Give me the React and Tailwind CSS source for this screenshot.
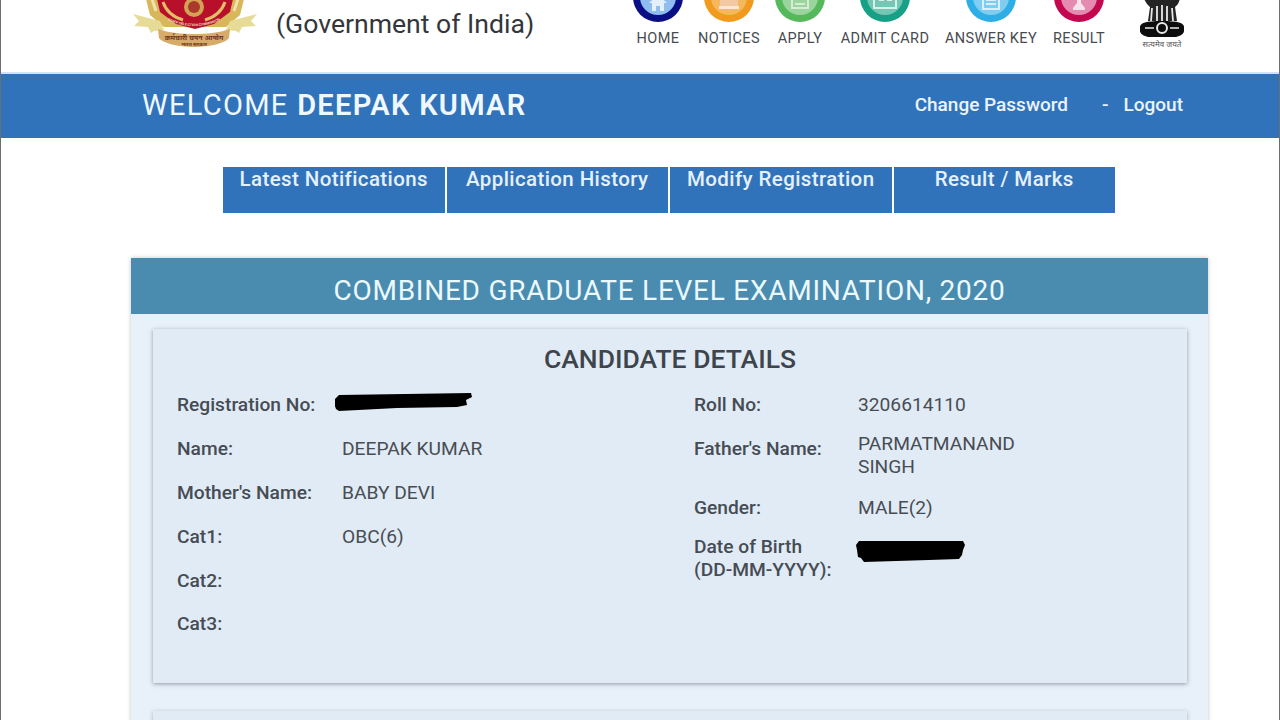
const navItems = [
  { label: 'HOME', width: 'w-[62px]', ring: 'bg-[#0b0f85]', inner: 'bg-[#8fbdf0]', glyph: 'home' },
  { label: 'NOTICES', width: 'w-[80px]', ring: 'bg-[#f09a1e]', inner: 'bg-[#f6b85f]', glyph: 'notice' },
  { label: 'APPLY', width: 'w-[62px]', ring: 'bg-[#55b85a]', inner: 'bg-[#9bd59d]', glyph: 'apply' },
  { label: 'ADMIT CARD', width: 'w-[108px]', ring: 'bg-[#16a085]', inner: 'bg-[#74c7b3]', glyph: 'card' },
  { label: 'ANSWER KEY', width: 'w-[104px]', ring: 'bg-[#2eaee6]', inner: 'bg-[#7fcdf0]', glyph: 'key' },
  { label: 'RESULT', width: 'w-[72px]', ring: 'bg-[#c4084f]', inner: 'bg-[#e58bb1]', glyph: 'result' },
];

const tabs = ['Latest Notifications', 'Application History', 'Modify Registration', 'Result / Marks'];

const leftRows = [
  ['Registration No:', null],
  ['Name:', 'DEEPAK KUMAR'],
  ["Mother's Name:", 'BABY DEVI'],
  ['Cat1:', 'OBC(6)'],
  ['Cat2:', ''],
  ['Cat3:', ''],
];

function NavGlyph({ type }) {
  return (
    <svg width="26" height="16" viewBox="0 0 26 16" className="mb-[4px]">
      {type === 'home' && <path d="M7 16V8H4l9-8 9 8h-3v8h-4v-5h-4v5z" fill="#e4f1fd" />}
      {type === 'notice' && (
        <g>
          <rect x="4" y="0" width="18" height="12" fill="#f3c9a3" />
          <rect x="3" y="11" width="20" height="3" fill="#fbe7d2" />
        </g>
      )}
      {type === 'apply' && (
        <g fill="none" stroke="#d5edd5" strokeWidth="2">
          <rect x="5" y="1" width="16" height="12" />
          <path d="M8 9h10" />
        </g>
      )}
      {type === 'card' && (
        <g fill="none" stroke="#d6f1ea" strokeWidth="2">
          <rect x="2" y="0" width="22" height="13" />
          <path d="M7 5h5M15 5h5" />
        </g>
      )}
      {type === 'key' && (
        <g fill="none" stroke="#d7f0fb" strokeWidth="2">
          <rect x="5" y="0" width="16" height="14" />
          <path d="M8 5h10M8 9h10" />
        </g>
      )}
      {type === 'result' && <path d="M11 0h4v8l4 5v2H7v-2l4-5z" fill="#f8e3ec" />}
    </svg>
  );
}

function NavItem({ item }) {
  return (
    <div className={`flex flex-col items-center ${item.width}`}>
      <div className={`flex h-[50px] w-[50px] items-center justify-center rounded-full ${item.ring}`}>
        <div className={`flex h-[36px] w-[36px] items-end justify-center rounded-full ${item.inner}`}>
          <NavGlyph type={item.glyph} />
        </div>
      </div>
      <span className="mt-[8px] text-[14.5px] leading-[18px] tracking-[0.4px] whitespace-nowrap text-[#474b50]">
        {item.label}
      </span>
    </div>
  );
}

function SscLogo() {
  return (
    <svg width="124" height="48" viewBox="0 0 124 48" className="shrink-0">
      {/* wreath behind the shield */}
      <path d="M13 0h98l-4 16-14 12H31L17 16z" fill="#d8b75a" />
      <path d="M19 0l4 12M27 0l4 14M105 0l-4 12M97 0l-4 14" stroke="#f0e2ae" strokeWidth="3" />
      {/* shield */}
      <path d="M24 0h76l-3 13-16 12-19 5-19-5-16-12z" fill="#b80f2a" />
      <circle cx="61" cy="8" r="10" fill="#d3a253" />
      <circle cx="61" cy="8" r="6" fill="#a93a2c" />
      <path d="M30 3c3 9 10 15 20 18M92 3c-3 9-10 15-20 18" fill="none" stroke="#e3bd67" strokeWidth="3" />
      <path id="ssc-arc" d="M30 18c8 6 20 9 31 9s23-3 31-9" fill="none" />
      <text fontSize="3.4" fill="#efe3cb" fontFamily="'Liberation Sans', sans-serif" fontWeight="700">
        <textPath href="#ssc-arc" startOffset="50%" textAnchor="middle">STAFF SELECTION COMMISSION</textPath>
      </text>
      {/* ribbon wings */}
      <path d="M0 15l27 7 4 9-10 1-3 2-3-6-14-1 5-5z" fill="#e6dc97" />
      <path d="M124 15l-27 7-4 9 10 1 3 2 3-6 14-1-5-5z" fill="#e6dc97" />
      {/* scroll */}
      <path d="M25 30c11 4 24 5 36 5s25-1 36-5l-1 9c-3 5-20 9-35 9s-32-4-35-9z" fill="#d7ab68" />
      <text x="61" y="41" textAnchor="middle" fontSize="7" fontWeight="700" fill="#6f3520" fontFamily="'Noto Sans', sans-serif">कर्मचारी चयन आयोग</text>
      <text x="61" y="47" textAnchor="middle" fontSize="5" fontWeight="700" fill="#6f3520" fontFamily="'Noto Sans', sans-serif">भारत सरकार</text>
    </svg>
  );
}

function Emblem() {
  return (
    <svg width="46" height="50" viewBox="0 0 46 50" className="shrink-0">
      <path d="M5 0h36l-2 5-3 3 2 14H9l2-14-3-3z" fill="#242424" />
      <path d="M13 9l-1 13M18 7v15M23 6v16M28 7v15M33 9l1 13" stroke="#e9e9e9" strokeWidth="1.8" />
      <path d="M1 28c0-4 6-6 22-6s22 2 22 6v4c0 3-4 5-8 6H9c-4-1-8-3-8-6z" fill="#0d0d0d" />
      <circle cx="23" cy="29" r="5" fill="none" stroke="#e8e8e8" strokeWidth="2" />
      <path d="M6 29h9M31 29h9" stroke="#e8e8e8" strokeWidth="1.6" />
      <text x="23" y="48" textAnchor="middle" fontSize="8" fill="#555" fontFamily="'Noto Sans', sans-serif">सत्यमेव जयते</text>
    </svg>
  );
}

function Redaction({ wide }) {
  if (wide) {
    return (
      <svg width="137" height="20" viewBox="0 0 137 20" className="block">
        <path d="M4 3L136 1l1 4-6 3 1 5-10 2-60 1-58 3-3-2-3-8 2-2z" fill="#000" />
      </svg>
    );
  }
  return (
    <svg width="109" height="23" viewBox="0 0 109 23" className="block">
      <path d="M3 1h104l2 4-2 5-1 5-3 4-30 1-65 2-3-4-3-1-1-7-1-5z" fill="#000" />
    </svg>
  );
}

function Label({ children, className = '' }) {
  return <div className={`w-[164px] shrink-0 text-[19.2px] leading-[23px] font-medium text-[#464c54] ${className}`}>{children}</div>;
}

function Value({ children, className = '' }) {
  return <div className={`w-[170px] text-[19.2px] leading-[23px] text-[#484d54] ${className}`}>{children}</div>;
}

export default function App() {
  return (
    <div className="h-[720px] overflow-hidden border-x border-[#6b6f74] bg-white font-['Roboto',sans-serif]">
      <header className="flex h-[72px] items-end overflow-hidden pb-[24px] pl-[132px]">
        <div className="flex items-end">
          <div className="mb-[1px]">
            <SscLogo />
          </div>
          <div className="mb-[8px] ml-[19px] w-[351px] text-[26.6px] leading-[32px] text-[#33363a]">(Government of India)</div>
        </div>
        <nav className="flex items-end">
          {navItems.map((item) => (
            <NavItem key={item.label} item={item} />
          ))}
        </nav>
        <div className="mb-[-1px] ml-[24px]">
          <Emblem />
        </div>
      </header>

      <div className="h-[2px] bg-[#cfe2f6]" />
      <div className="flex h-[64px] items-center justify-between bg-[#3173bb] pr-[96px] pl-[141px] text-white">
        <div className="text-[29px] tracking-[1.3px] text-[#f0f8ff]">
          WELCOME <span className="font-semibold">DEEPAK KUMAR</span>
        </div>
        <div className="mb-[2px] flex items-center text-[19px] font-medium text-[#eaf4fd]">
          <span>Change Password</span>
          <span className="mr-[15px] ml-[34px]">-</span>
          <span>Logout</span>
        </div>
      </div>

      <div className="mt-[29px] ml-[222px] grid h-[46px] w-[892px] grid-cols-4 gap-[2px]">
        {tabs.map((tab) => (
          <div key={tab} className="bg-[#3173bb] text-center text-[20.5px] leading-[24px] font-medium tracking-[0.4px] text-[#e4f1fb]">
            {tab}
          </div>
        ))}
      </div>

      <section className="mt-[45px] ml-[130px] w-[1077px] bg-[#e8f0f9] pb-[40px] shadow-[0_0_4px_rgba(90,80,70,0.35)]">
        <div className="h-[56px] bg-[#4a8bb0] text-center text-[28px] leading-[66px] tracking-[0.75px] text-[#ebf9fc]">
          COMBINED GRADUATE LEVEL EXAMINATION, 2020
        </div>

        <div className="mt-[15px] mr-[21px] ml-[22px] h-[354px] bg-[#e1ebf5] px-[24px] shadow-[0_1px_4px_rgba(70,80,100,0.55)]">
          <h2 className="pt-[14px] text-center text-[26.5px] leading-[32px] font-medium text-[#3d444c]">CANDIDATE DETAILS</h2>
          <div className="mt-[18px] flex">
            <div className="w-[517px]">
              {leftRows.map(([label, value]) => (
                <div key={label} className="flex h-[43.9px]">
                  <Label>{label}</Label>
                  {value === null ? (
                    <div className="-mt-[1px] -ml-[6px]">
                      <Redaction wide />
                    </div>
                  ) : (
                    <Value className="ml-[1px]">{value}</Value>
                  )}
                </div>
              ))}
            </div>

            <div>
              <div className="flex h-[39px]">
                <Label>Roll No:</Label>
                <Value>3206614110</Value>
              </div>
              <div className="flex h-[64px]">
                <Label className="pt-[5px]">Father's Name:</Label>
                <Value>PARMATMANAND SINGH</Value>
              </div>
              <div className="flex h-[39px]">
                <Label>Gender:</Label>
                <Value>MALE(2)</Value>
              </div>
              <div className="flex">
                <Label>
                  Date of Birth
                  <br />
                  (DD-MM-YYYY):
                </Label>
                <div className="-ml-[2px] pt-[5px]">
                  <Redaction />
                </div>
              </div>
            </div>
          </div>
        </div>

        <div className="mt-[28px] mr-[21px] ml-[22px] h-[60px] bg-[#e1ebf5] shadow-[0_1px_4px_rgba(70,80,100,0.4)]" />
      </section>
    </div>
  );
}
